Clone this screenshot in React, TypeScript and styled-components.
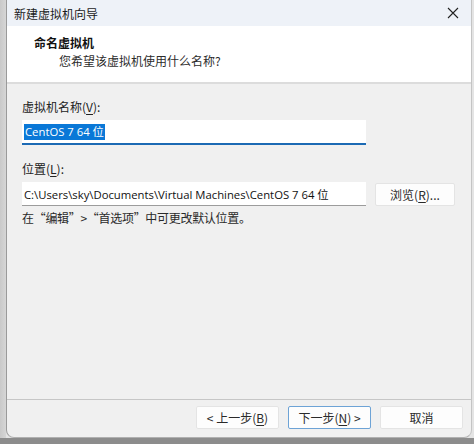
import React from 'react';
import styled, { createGlobalStyle } from 'styled-components';

const GlobalStyle = createGlobalStyle`
    html, body {
        margin: 0;
        padding: 0;
    }
    body {
        width: 474px;
        height: 444px;
        overflow: hidden;
        font-family: "Noto Sans", "Noto Sans CJK SC", sans-serif;
    }
`;

const Desktop = styled.div`
    box-sizing: border-box;
    width: 474px;
    height: 444px;
    padding: 0 2px 6px 6px;
    background:
        linear-gradient(to bottom, transparent 438px, #8c8c8c 438px),
        linear-gradient(to right, #c9c9c9 0, #d6d6d6 6px, #e4e4e4 6px);
    display: flex;
`;

const Window = styled.div`
    flex: 1;
    display: flex;
    flex-direction: column;
    background: #f0f0f0;
    border-left: 1px solid #9a9a9a;
    border-right: 1px solid #c4c4c4;
    border-bottom: 1px solid #b0b0b0;
    border-radius: 0 0 8px 8px;
    overflow: hidden;
`;

const TitleBar = styled.div`
    height: 26px;
    display: flex;
    align-items: center;
    justify-content: space-between;
    padding: 0 8px 0 7px;
    background: #eef2f8;
`;

const Title = styled.span`
    font-family: "Noto Sans CJK SC", sans-serif;
    font-size: 12px;
    color: #1b1b1b;
`;

const CloseIcon = styled.svg`
    width: 12px;
    height: 12px;
    margin-right: 4px;
`;

const Header = styled.div`
    height: 58px;
    box-sizing: border-box;
    background: #ffffff;
    border-bottom: 2px solid #dcdcdc;
    padding: 8px 0 0 27px;
    display: flex;
    flex-direction: column;
    gap: 1px;
`;

const HeaderTitle = styled.div`
    font-family: "Noto Sans CJK SC", serif;
    font-weight: 700;
    font-size: 12px;
    line-height: 17px;
    color: #111;
`;

const HeaderHint = styled.div`
    font-family: "Noto Sans CJK SC", serif;
    font-size: 12px;
    line-height: 17px;
    color: #2c2c2c;
    padding-left: 25px;
`;

const Body = styled.div`
    flex: 1;
    padding: 15px 0 0 15px;
    display: flex;
    flex-direction: column;
`;

const Label = styled.div<{ $gap?: number }>`
    font-family: "Noto Sans CJK SC", sans-serif;
    font-size: 12px;
    line-height: 16px;
    color: #222;
    margin-top: ${p => p.$gap ?? 0}px;
    margin-bottom: 5px;

    u {
        text-decoration: underline;
        text-underline-offset: 2px;
    }
`;

const Row = styled.div`
    display: flex;
    align-items: center;
    gap: 9px;
`;

const Field = styled.div<{ $active?: boolean }>`
    box-sizing: border-box;
    width: 344px;
    height: ${p => (p.$active ? 25 : 24)}px;
    background: #ffffff;
    border-bottom: ${p => (p.$active ? '2px solid #1c6ab4' : '1px solid #9c9c9c')};
    display: flex;
    align-items: center;
    padding-left: 2px;
    font-family: "Open Sans", "Noto Sans CJK SC", sans-serif;
    font-size: 11.3px;
    color: #111;
    white-space: nowrap;
    overflow: hidden;
`;

const Selected = styled.span`
    background: #0a78d7;
    color: #ffffff;
    padding: 0 1px;
    line-height: 16px;
`;

const Button = styled.button<{ $primary?: boolean; $w?: number }>`
    box-sizing: border-box;
    width: ${p => p.$w ?? 83}px;
    height: 23px;
    background: #fdfdfd;
    border: 1px solid ${p => (p.$primary ? '#6da3d6' : '#e4e4e4')};
    border-radius: 2px;
    font-family: "Noto Sans CJK SC", sans-serif;
    font-size: 12px;
    color: #2a2a2a;
    padding: 0;
    display: flex;
    align-items: center;
    justify-content: center;

    u {
        text-decoration: underline;
        text-underline-offset: 2px;
    }
`;

const Note = styled.div`
    font-family: "Noto Sans CJK SC", serif;
    font-size: 12px;
    line-height: 16px;
    color: #2a2a2a;
    margin-top: 4px;
    letter-spacing: -0.3px;
`;

const Footer = styled.div`
    height: 38px;
    border-top: 1px solid #c6c6c6;
    display: flex;
    align-items: center;
    justify-content: flex-end;
    gap: 9px;
    padding: 0 8px 2px 0;
    box-sizing: border-box;
`;

const App = () => (
    <>
        <GlobalStyle />
        <Desktop>
            <Window>
                <TitleBar>
                    <Title>新建虚拟机向导</Title>
                    <CloseIcon viewBox="0 0 12 12">
                        <path d="M1 1 L11 11 M11 1 L1 11" stroke="#222" strokeWidth="1.1" />
                    </CloseIcon>
                </TitleBar>
                <Header>
                    <HeaderTitle>命名虚拟机</HeaderTitle>
                    <HeaderHint>您希望该虚拟机使用什么名称?</HeaderHint>
                </Header>
                <Body>
                    <Label>虚拟机名称(<u>V</u>):</Label>
                    <Field $active>
                        <Selected>CentOS 7 64 位</Selected>
                    </Field>
                    <Label $gap={16}>位置(<u>L</u>):</Label>
                    <Row>
                        <Field>C:\Users\sky\Documents\Virtual Machines\CentOS 7 64 位</Field>
                        <Button $w={80}>浏览(<u>R</u>)...</Button>
                    </Row>
                    <Note>在“编辑”&gt;“首选项”中可更改默认位置。</Note>
                </Body>
                <Footer>
                    <Button>&lt; 上一步(<u>B</u>)</Button>
                    <Button $primary>下一步(<u>N</u>) &gt;</Button>
                    <Button>取消</Button>
                </Footer>
            </Window>
        </Desktop>
    </>
);

export default App;
